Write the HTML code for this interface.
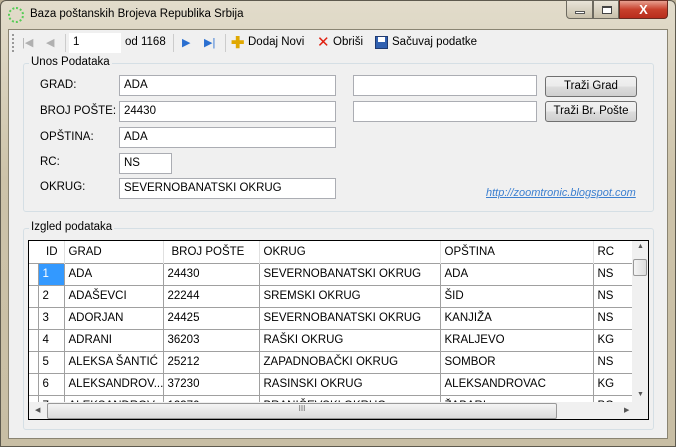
<!DOCTYPE html><html><head><meta charset="utf-8"><style>
*{box-sizing:border-box;margin:0;padding:0}
body{width:676px;height:447px;overflow:hidden;background:#b9ae94;font-family:"Liberation Sans",sans-serif;font-size:11.5px;color:#000;position:relative}
.a{position:absolute}
.frame{left:0;top:0;width:676px;height:447px;background:linear-gradient(#e2dccb,#cdc3a9 40%,#c8bea4);border:1px solid #5e5a4e;border-radius:6px 6px 0 0}
.client{left:8px;top:29px;width:660px;height:410px;background:#f0f0f0;border:1px solid #8a8472}
.inp{background:#fff;border:1px solid #abadb3;height:21px;padding:3px 4px;font-size:11.5px}
.btn{border:1px solid #707070;border-radius:3px;background:linear-gradient(#f2f2f2,#ebebeb 50%,#dddddd 51%,#cfcfcf);text-align:center;font-size:11.5px;padding-top:3px;height:21px}
.grp{border:1px solid #d5dfe5;border-radius:3px}
.gl{background:#f0f0f0;padding:0 2px;font-size:11.5px}
table{border-collapse:collapse;font-size:11.5px}
td{border:1px solid #a0a0a0;height:22px;padding:0 4px;white-space:nowrap;overflow:hidden}
th{font-weight:normal;text-align:left;height:22px;padding:0 4px;border-right:1px solid #e0e0e0;background:#fff}
</style></head><body>
<div class="a frame"></div>
<div class="a" style="left:8px;top:7px;width:16px;height:16px;border-radius:50%;border:2px dotted #5c5"></div>
<div class="a" style="left:30px;top:8px;font-size:11.5px">Baza poštanskih Brojeva Republika Srbija</div>
<div class="a" style="left:566px;top:0;width:27px;height:19px;border:1px solid #6d6a60;border-radius:0 0 0 4px;background:linear-gradient(#e9e4d8,#c8c0ab)"><div class="a" style="left:8px;top:10px;width:10px;height:3px;background:#fff;border:1px solid #555"></div></div>
<div class="a" style="left:593px;top:0;width:26px;height:19px;border:1px solid #6d6a60;background:linear-gradient(#e9e4d8,#c8c0ab)"><div class="a" style="left:8px;top:5px;width:10px;height:8px;border:1px solid #444;border-top-width:2px;background:#fff"></div></div>
<div class="a" style="left:619px;top:0;width:49px;height:19px;border:1px solid #6a2a20;border-radius:0 0 4px 0;background:linear-gradient(#e7a090,#c8402c 50%,#b82d1c);color:#fff;font-weight:bold;text-align:center;font-size:13px;line-height:17px">X</div>
<div class="a client"></div>
<div class="a" style="left:10px;top:30px;width:656px;height:26px;background:#f0f0f0"></div>
<div class="a" style="left:12px;top:34px;width:2px;height:18px;border-left:2px dotted #999"></div>
<div class="a" style="left:22px;top:36px;color:#b0b0b0;font-size:11px">|◀</div>
<div class="a" style="left:46px;top:36px;color:#b0b0b0;font-size:11px">◀</div>
<div class="a" style="left:65px;top:34px;width:1px;height:18px;background:#ccc"></div>
<div class="a" style="left:69px;top:33px;width:52px;height:20px;background:#fff;padding:3px 4px">1</div>
<div class="a" style="left:125px;top:36px">od 1168</div>
<div class="a" style="left:173px;top:34px;width:1px;height:18px;background:#ccc"></div>
<div class="a" style="left:182px;top:36px;color:#2a6fd0;font-size:11px">▶</div>
<div class="a" style="left:204px;top:36px;color:#2a6fd0;font-size:11px">▶|</div>
<div class="a" style="left:225px;top:34px;width:1px;height:18px;background:#ccc"></div>
<div class="a" style="left:231px;top:33px;color:#e0a800;font-size:16px;font-weight:bold">✚</div>
<div class="a" style="left:248px;top:36px">Dodaj Novi</div>
<div class="a" style="left:317px;top:33px;color:#e02010;font-size:15px">✕</div>
<div class="a" style="left:333px;top:36px">Obriši</div>
<div class="a" style="left:375px;top:36px;width:13px;height:13px;background:#3060b0;border:1px solid #203a70"><div class="a" style="left:2px;top:0;width:7px;height:5px;background:#fff"></div></div>
<div class="a" style="left:392px;top:36px">Sačuvaj podatke</div>
<div class="a grp" style="left:23px;top:63px;width:631px;height:149px"></div>
<div class="a gl" style="left:29px;top:56px">Unos Podataka</div>
<div class="a" style="left:40px;top:79px">GRAD:</div>
<div class="a" style="left:40px;top:105px">BROJ POŠTE:</div>
<div class="a" style="left:40px;top:131px">OPŠTINA:</div>
<div class="a" style="left:40px;top:156px">RC:</div>
<div class="a" style="left:40px;top:181px">OKRUG:</div>
<div class="a inp" style="left:119px;top:75px;width:217px">ADA</div>
<div class="a inp" style="left:119px;top:101px;width:217px">24430</div>
<div class="a inp" style="left:119px;top:127px;width:217px">ADA</div>
<div class="a inp" style="left:119px;top:153px;width:53px">NS</div>
<div class="a inp" style="left:119px;top:178px;width:217px">SEVERNOBANATSKI OKRUG</div>
<div class="a inp" style="left:353px;top:75px;width:184px"></div>
<div class="a inp" style="left:353px;top:101px;width:184px"></div>
<div class="a btn" style="left:545px;top:76px;width:92px">Traži Grad</div>
<div class="a btn" style="left:545px;top:101px;width:92px">Traži Br. Pošte</div>
<div class="a" style="left:486px;top:187px;color:#3b7fd0;font-style:italic;text-decoration:underline;font-size:11px">http://zoomtronic.blogspot.com</div>
<div class="a grp" style="left:23px;top:228px;width:631px;height:202px"></div>
<div class="a gl" style="left:29px;top:221px">Izgled podataka</div>
<div class="a" style="left:28px;top:240px;width:621px;height:180px;border:1px solid #000;background:#ababab;overflow:hidden">
<table class="a" style="left:0;top:0;width:603px;table-layout:fixed;background:#fff">
<colgroup><col style="width:9px"><col style="width:26px"><col style="width:99px"><col style="width:96px"><col style="width:181px"><col style="width:153px"><col style="width:39px"></colgroup>
<tr><th style="border:none"></th><th style="padding-left:8px">ID</th><th>GRAD</th><th style="padding-left:8px">BROJ POŠTE</th><th>OKRUG</th><th>OPŠTINA</th><th>RC</th></tr>
<tr><td style="border-left:none"></td><td style="background:#3399ff;color:#fff">1</td><td>ADA</td><td>24430</td><td>SEVERNOBANATSKI OKRUG</td><td>ADA</td><td>NS</td></tr>
<tr><td style="border-left:none"></td><td>2</td><td>ADAŠEVCI</td><td>22244</td><td>SREMSKI OKRUG</td><td>ŠID</td><td>NS</td></tr>
<tr><td style="border-left:none"></td><td>3</td><td>ADORJAN</td><td>24425</td><td>SEVERNOBANATSKI OKRUG</td><td>KANJIŽA</td><td>NS</td></tr>
<tr><td style="border-left:none"></td><td>4</td><td>ADRANI</td><td>36203</td><td>RAŠKI OKRUG</td><td>KRALJEVO</td><td>KG</td></tr>
<tr><td style="border-left:none"></td><td>5</td><td>ALEKSA ŠANTIĆ</td><td>25212</td><td>ZAPADNOBAČKI OKRUG</td><td>SOMBOR</td><td>NS</td></tr>
<tr><td style="border-left:none"></td><td>6</td><td>ALEKSANDROV...</td><td>37230</td><td>RASINSKI OKRUG</td><td>ALEKSANDROVAC</td><td>KG</td></tr>
<tr><td style="border-left:none"></td><td>7</td><td>ALEKSANDROV...</td><td>12370</td><td>BRANIČEVSKI OKRUG</td><td>ŽABARI</td><td>PO</td></tr>
</table>
<div class="a" style="left:603px;top:0;width:17px;height:161px;background:#f0f0f0"><div class="a" style="left:5px;top:2px;font-size:7px;color:#555">▲</div><div class="a" style="left:1px;top:18px;width:14px;height:17px;border:1px solid #999;border-radius:2px;background:linear-gradient(90deg,#f4f4f4,#dcdcdc)"></div><div class="a" style="left:5px;top:150px;font-size:7px;color:#555">▼</div></div>
<div class="a" style="left:0;top:161px;width:620px;height:18px;background:#f0f0f0"><div class="a" style="left:6px;top:4px;font-size:7px;color:#555">◀</div><div class="a" style="left:18px;top:1px;width:510px;height:16px;border:1px solid #999;border-radius:2px;background:linear-gradient(#f4f4f4,#dcdcdc);text-align:center;font-size:8px;color:#666">III</div><div class="a" style="left:595px;top:4px;font-size:7px;color:#555">▶</div></div>
</div>
</body></html>
